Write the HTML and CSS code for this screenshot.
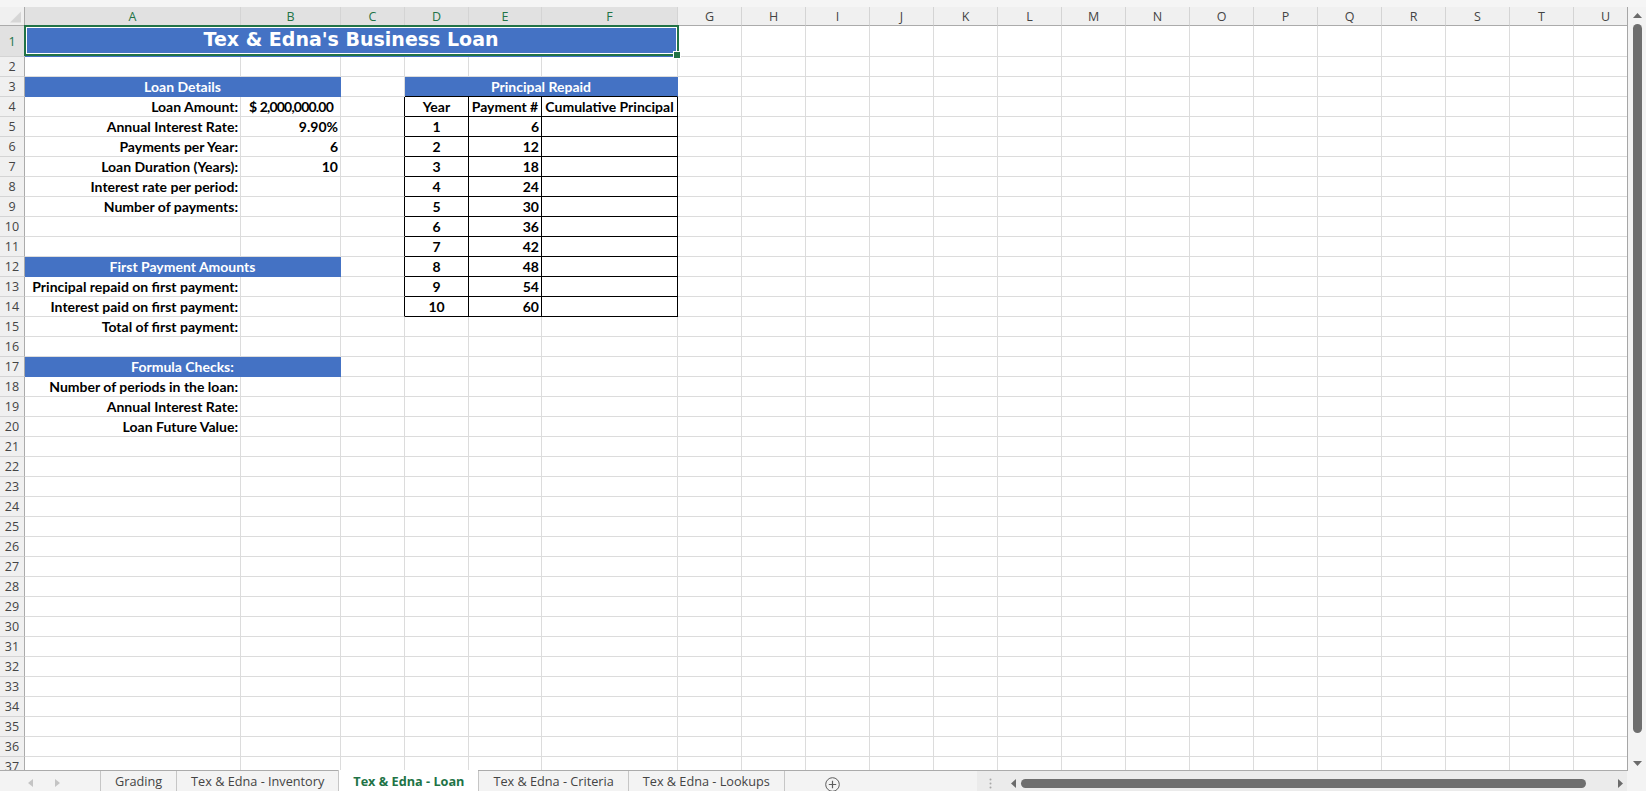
FILE: index.html
```html
<!DOCTYPE html>
<html lang="en">
<head>
<meta charset="utf-8">
<title>Tex &amp; Edna's Business Loan</title>
<link rel="stylesheet" href="styles.css">
</head>
<body>
<div class="app">
  <div class="topstrip"></div>
  <div class="workarea">
    <div class="sheet">
      <div class="row colhead">
        <span class="corner"><svg width="24" height="18" viewBox="0 0 24 18"><polygon points="21,4.5 21,15.5 10,15.5" fill="#d6d6d6"/></svg></span>
        <span class="sel">A</span><span class="sel">B</span><span class="sel">C</span><span class="sel">D</span><span class="sel">E</span><span class="sel">F</span>
        <span>G</span><span>H</span><span>I</span><span>J</span><span>K</span><span>L</span><span>M</span><span>N</span><span>O</span><span>P</span><span>Q</span><span>R</span><span>S</span><span>T</span><span>U</span>
      </div>
      <div class="row r1"><span class="rh sel">1</span><span class="c title">Tex &amp; Edna's Business Loan</span><span class="rest"></span></div>
      <div class="row"><span class="rh">2</span><span></span><span></span><span></span><span></span><span></span><span></span><span class="rest"></span></div>
      <div class="row"><span class="rh">3</span><span class="c hdr s2">Loan Details</span><span></span><span class="c hdr s3 tbtop">Principal Repaid</span><span class="rest"></span></div>
      <div class="row"><span class="rh">4</span><span class="c lbl">Loan Amount:</span><span class="c acct"><span>$</span><span class="amt">2,000,000.00</span></span><span class="tl"></span><span class="c ctr tb">Year</span><span class="c ctr tb">Payment #</span><span class="c ctr tb">Cumulative Principal</span><span class="rest"></span></div>
      <div class="row"><span class="rh">5</span><span class="c lbl">Annual Interest Rate:</span><span class="c num">9.90%</span><span class="tl"></span><span class="c ctr tb">1</span><span class="c num tb">6</span><span class="tb"></span><span class="rest"></span></div>
      <div class="row"><span class="rh">6</span><span class="c lbl">Payments per Year:</span><span class="c num">6</span><span class="tl"></span><span class="c ctr tb">2</span><span class="c num tb">12</span><span class="tb"></span><span class="rest"></span></div>
      <div class="row"><span class="rh">7</span><span class="c lbl">Loan Duration (Years):</span><span class="c num">10</span><span class="tl"></span><span class="c ctr tb">3</span><span class="c num tb">18</span><span class="tb"></span><span class="rest"></span></div>
      <div class="row"><span class="rh">8</span><span class="c lbl">Interest rate per period:</span><span></span><span class="tl"></span><span class="c ctr tb">4</span><span class="c num tb">24</span><span class="tb"></span><span class="rest"></span></div>
      <div class="row"><span class="rh">9</span><span class="c lbl">Number of payments:</span><span></span><span class="tl"></span><span class="c ctr tb">5</span><span class="c num tb">30</span><span class="tb"></span><span class="rest"></span></div>
      <div class="row"><span class="rh">10</span><span></span><span></span><span class="tl"></span><span class="c ctr tb">6</span><span class="c num tb">36</span><span class="tb"></span><span class="rest"></span></div>
      <div class="row"><span class="rh">11</span><span></span><span></span><span class="tl"></span><span class="c ctr tb">7</span><span class="c num tb">42</span><span class="tb"></span><span class="rest"></span></div>
      <div class="row"><span class="rh">12</span><span class="c hdr s2">First Payment Amounts</span><span class="tl"></span><span class="c ctr tb">8</span><span class="c num tb">48</span><span class="tb"></span><span class="rest"></span></div>
      <div class="row"><span class="rh">13</span><span class="c lbl">Principal repaid on first payment:</span><span></span><span class="tl"></span><span class="c ctr tb">9</span><span class="c num tb">54</span><span class="tb"></span><span class="rest"></span></div>
      <div class="row"><span class="rh">14</span><span class="c lbl">Interest paid on first payment:</span><span></span><span class="tl"></span><span class="c ctr tb">10</span><span class="c num tb">60</span><span class="tb"></span><span class="rest"></span></div>
      <div class="row"><span class="rh">15</span><span class="c lbl">Total of first payment:</span><span></span><span></span><span></span><span></span><span></span><span class="rest"></span></div>
      <div class="row"><span class="rh">16</span><span></span><span></span><span></span><span></span><span></span><span></span><span class="rest"></span></div>
      <div class="row"><span class="rh">17</span><span class="c hdr s2">Formula Checks:</span><span></span><span></span><span></span><span></span><span class="rest"></span></div>
      <div class="row"><span class="rh">18</span><span class="c lbl">Number of periods in the loan:</span><span></span><span></span><span></span><span></span><span></span><span class="rest"></span></div>
      <div class="row"><span class="rh">19</span><span class="c lbl">Annual Interest Rate:</span><span></span><span></span><span></span><span></span><span></span><span class="rest"></span></div>
      <div class="row"><span class="rh">20</span><span class="c lbl">Loan Future Value:</span><span></span><span></span><span></span><span></span><span></span><span class="rest"></span></div>
      <div class="row"><span class="rh">21</span><span></span><span></span><span></span><span></span><span></span><span></span><span class="rest"></span></div>
      <div class="row"><span class="rh">22</span><span></span><span></span><span></span><span></span><span></span><span></span><span class="rest"></span></div>
      <div class="row"><span class="rh">23</span><span></span><span></span><span></span><span></span><span></span><span></span><span class="rest"></span></div>
      <div class="row"><span class="rh">24</span><span></span><span></span><span></span><span></span><span></span><span></span><span class="rest"></span></div>
      <div class="row"><span class="rh">25</span><span></span><span></span><span></span><span></span><span></span><span></span><span class="rest"></span></div>
      <div class="row"><span class="rh">26</span><span></span><span></span><span></span><span></span><span></span><span></span><span class="rest"></span></div>
      <div class="row"><span class="rh">27</span><span></span><span></span><span></span><span></span><span></span><span></span><span class="rest"></span></div>
      <div class="row"><span class="rh">28</span><span></span><span></span><span></span><span></span><span></span><span></span><span class="rest"></span></div>
      <div class="row"><span class="rh">29</span><span></span><span></span><span></span><span></span><span></span><span></span><span class="rest"></span></div>
      <div class="row"><span class="rh">30</span><span></span><span></span><span></span><span></span><span></span><span></span><span class="rest"></span></div>
      <div class="row"><span class="rh">31</span><span></span><span></span><span></span><span></span><span></span><span></span><span class="rest"></span></div>
      <div class="row"><span class="rh">32</span><span></span><span></span><span></span><span></span><span></span><span></span><span class="rest"></span></div>
      <div class="row"><span class="rh">33</span><span></span><span></span><span></span><span></span><span></span><span></span><span class="rest"></span></div>
      <div class="row"><span class="rh">34</span><span></span><span></span><span></span><span></span><span></span><span></span><span class="rest"></span></div>
      <div class="row"><span class="rh">35</span><span></span><span></span><span></span><span></span><span></span><span></span><span class="rest"></span></div>
      <div class="row"><span class="rh">36</span><span></span><span></span><span></span><span></span><span></span><span></span><span class="rest"></span></div>
      <div class="row"><span class="rh">37</span><span></span><span></span><span></span><span></span><span></span><span></span><span class="rest"></span></div>
    </div>
    <div class="vscroll">
      <svg class="varrow" width="9" height="5" viewBox="0 0 9 5"><polygon points="0,5 4.5,0 9,5" fill="#6b6b6b"/></svg>
      <div class="vthumb"></div>
      <svg class="varrow down" width="9" height="5" viewBox="0 0 9 5"><polygon points="0,0 9,0 4.5,5" fill="#6b6b6b"/></svg>
    </div>
  </div>
  <div class="tabbar">
    <div class="nav">
      <svg width="5" height="8" viewBox="0 0 5 8"><polygon points="5,0 5,8 0,4" fill="#c4c4c4"/></svg>
      <svg class="navr" width="5" height="8" viewBox="0 0 5 8"><polygon points="0,0 5,4 0,8" fill="#c4c4c4"/></svg>
    </div>
    <div class="tab">Grading</div>
    <div class="tab">Tex &amp; Edna - Inventory</div>
    <div class="tab active">Tex &amp; Edna - Loan</div>
    <div class="tab">Tex &amp; Edna - Criteria</div>
    <div class="tab last">Tex &amp; Edna - Lookups</div>
    <div class="add">
      <svg width="15" height="15" viewBox="0 0 15 15"><circle cx="7.5" cy="7.5" r="6.8" fill="none" stroke="#5c5c5c" stroke-width="1"/><path d="M7.5 3.8v7.4M3.8 7.5h7.4" stroke="#5c5c5c" stroke-width="1.2"/></svg>
    </div>
    <div class="spacer"></div>
    <div class="hscroll">
      <svg width="3" height="11" viewBox="0 0 3 11"><circle cx="1.5" cy="1.5" r="1" fill="#a8a8a8"/><circle cx="1.5" cy="5.5" r="1" fill="#a8a8a8"/><circle cx="1.5" cy="9.5" r="1" fill="#a8a8a8"/></svg>
      <svg class="hleft" width="5" height="9" viewBox="0 0 5 9"><polygon points="5,0 5,9 0,4.5" fill="#6b6b6b"/></svg>
      <div class="hthumb"></div>
      <svg class="hright" width="5" height="9" viewBox="0 0 5 9"><polygon points="0,0 5,4.5 0,9" fill="#6b6b6b"/></svg>
    </div>
    <div class="cornerbr"></div>
  </div>
</div>
</body>
</html>
```

FILE: styles.css
```css
html, body {
  margin: 0;
  padding: 0;
}

body {
  width: 1646px;
  height: 791px;
  overflow: hidden;
  background: #f3f3f3;
  font-family: "Lato", "Liberation Sans", sans-serif;
}

.app {
  display: flex;
  flex-direction: column;
  width: 1646px;
  height: 791px;
}

.topstrip {
  flex: none;
  height: 7px;
  background: #f5f5f5;
}

.workarea {
  flex: none;
  display: flex;
  height: 764px;
}

.sheet {
  flex: none;
  width: 1627px;
  height: 763px;
  overflow: hidden;
  background: #fff;
  border-right: 1px solid #a6a6a6;
  border-bottom: 1px solid #ababab;
}

/* rows */
.row {
  display: grid;
  grid-template-columns: 25px 216px 100px 64px 64px 73px 136px 960px;
  height: 20px;
}

.row > span {
  box-sizing: border-box;
  min-width: 0;
  border-right: 1px solid #dcdcdc;
  border-bottom: 1px solid #dcdcdc;
}

.row > .rest {
  border-right: 0;
  background: repeating-linear-gradient(to right, transparent 0 63px, #dcdcdc 63px 64px);
}

.r1 {
  height: 31px;
}

/* column header */
.colhead {
  grid-template-columns: 25px 216px 100px 64px 64px 73px 136px repeat(15, 64px);
  height: 19px;
}

.colhead > span {
  display: flex;
  align-items: center;
  justify-content: center;
  background: #f0f0f0;
  border-right-color: #d4d4d4;
  border-bottom-color: #ababab;
  font-family: "Open Sans", "Noto Sans", sans-serif;
  font-size: 12.5px;
  line-height: 17px;
  color: #444;
}

.colhead > .sel {
  background: #e1e1e1;
  color: #217346;
}

.colhead > .corner {
  display: block;
  border-right-color: #ababab;
  background: #f0f0f0;
}

.corner svg {
  display: block;
}

/* row header */
.row > .rh {
  display: flex;
  align-items: center;
  justify-content: center;
  background: #f0f0f0;
  border-right-color: #ababab;
  border-bottom-color: #d4d4d4;
  font-family: "Open Sans", "Noto Sans", sans-serif;
  font-size: 12.5px;
  color: #444;
}

.row > .rh.sel {
  background: #e1e1e1;
  color: #217346;
}

/* content cells */
.c {
  display: flex;
  align-items: flex-end;
  padding: 0 2px;
  font-size: 14px;
  font-weight: 700;
  line-height: 18px;
  color: #000;
  white-space: nowrap;
  overflow: hidden;
}

.lbl {
  justify-content: flex-end;
}

.num {
  justify-content: flex-end;
}

.ctr {
  justify-content: center;
}

.row > .acct {
  justify-content: space-between;
  padding: 0 7px 0 8px;
}

.amt {
  letter-spacing: -0.8px;
}

.s2 {
  grid-column: span 2;
}

.s3 {
  grid-column: span 3;
}

.row > .hdr {
  justify-content: center;
  background: #4472c4;
  color: #fff;
  border-color: #4472c4;
}

.row > .tbtop {
  border-bottom-color: #000;
}

.row > .tb {
  border-right-color: #000;
  border-bottom-color: #000;
}

.row > .tl {
  border-right-color: #000;
}

/* title with active selection */
.row > .title {
  grid-column: span 6;
  position: relative;
  overflow: visible;
  align-items: flex-start;
  justify-content: center;
  padding-top: 2px;
  background: #4472c4;
  border-color: #4472c4;
  color: #fff;
  font-family: "DejaVu Sans", "Liberation Sans", sans-serif;
  font-size: 19px;
  line-height: 22px;
}

.title::after {
  content: "";
  position: absolute;
  left: -1px;
  top: -1px;
  right: -2px;
  bottom: 0;
  border: 2px solid #217346;
  box-shadow: inset 0 0 0 1px #fff;
}

.title::before {
  content: "";
  position: absolute;
  z-index: 1;
  right: -3px;
  bottom: -2px;
  width: 6px;
  height: 6px;
  background: #217346;
  box-shadow: 0 0 0 1px #fff;
}

/* vertical scrollbar */
.vscroll {
  flex: none;
  box-sizing: border-box;
  width: 18px;
  height: 764px;
  padding-top: 6px;
  display: flex;
  flex-direction: column;
  align-items: center;
  background: #f3f3f3;
}

.varrow {
  display: block;
  flex: none;
}

.vthumb {
  flex: none;
  width: 9px;
  height: 709px;
  margin-top: 6px;
  border-radius: 5px;
  background: #6e6e6e;
}

.varrow.down {
  margin-top: 28px;
}

/* sheet tabs */
.tabbar {
  flex: none;
  display: flex;
  height: 20px;
  background: #f3f3f3;
  font-family: "Open Sans", "Noto Sans", sans-serif;
  font-size: 12.7px;
  color: #444;
}

.nav {
  flex: none;
  width: 100px;
  display: flex;
  align-items: center;
  padding: 4px 0 0 28px;
  box-sizing: border-box;
}

.nav svg {
  display: block;
}

.nav .navr {
  margin-left: 22px;
}

.tab {
  flex: none;
  padding: 2px 14px 0;
  line-height: 17px;
  border-left: 1px solid #c6c6c6;
  white-space: nowrap;
}

.tab.last {
  border-right: 1px solid #c6c6c6;
}

.tab.active {
  margin-top: -1px;
  padding-top: 3px;
  background: #fff;
  color: #217346;
  font-weight: 700;
}

.add {
  flex: none;
  padding: 6px 0 0 40px;
}

.add svg {
  display: block;
}

.spacer {
  flex: 1;
}

.hscroll {
  flex: none;
  box-sizing: border-box;
  width: 650px;
  display: flex;
  align-items: center;
  padding: 4px 0 0 12px;
  background: #ebebeb;
}

.hscroll svg {
  display: block;
  flex: none;
}

.hleft {
  margin-left: 19px;
}

.hthumb {
  flex: none;
  width: 565px;
  height: 9px;
  margin-left: 5px;
  border-radius: 5px;
  background: #6e6e6e;
}

.hright {
  margin-left: 32px;
}

.cornerbr {
  flex: none;
  width: 19px;
  background: #f3f3f3;
}
```
